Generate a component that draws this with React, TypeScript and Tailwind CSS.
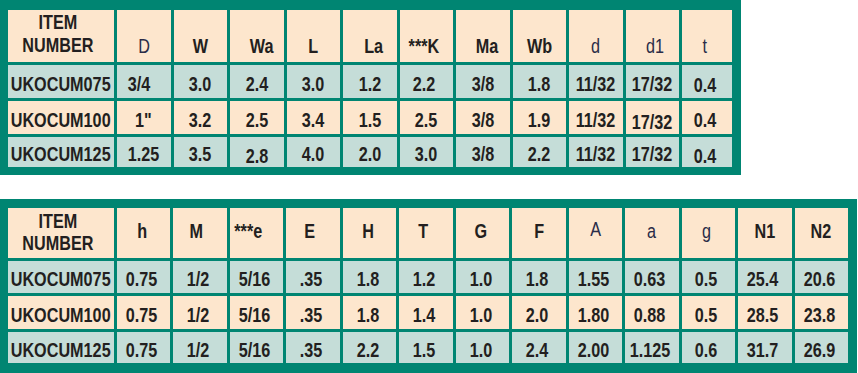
import React from "react";

type C = { t: string; n?: boolean; c?: string };

const CREAM = "bg-[#fde6cd]";
const GRAY = "bg-[#c5ddd8]";

const topHead: C[] = [
  { t: "D", n: true },
  { t: "W" },
  { t: "Wa", c: "translate-x-[5px]" },
  { t: "L" },
  { t: "La", c: "translate-x-[4px]" },
  { t: "***K", c: "-translate-x-[2px]" },
  { t: "Ma", c: "translate-x-[4px]" },
  { t: "Wb" },
  { t: "d", n: true },
  { t: "d1", n: true, c: "translate-x-[3px]" },
  { t: "t", n: true, c: "-translate-x-[2px]" },
];

const topRows: { id: string; v: C[] }[] = [
  {
    id: "UKOCUM075",
    v: [
      { t: "3/4", c: "-translate-x-[5px]" },
      { t: "3.0" },
      { t: "2.4" },
      { t: "3.0" },
      { t: "1.2" },
      { t: "2.2", c: "-translate-x-[2px]" },
      { t: "3/8" },
      { t: "1.8" },
      { t: "11/32" },
      { t: "17/32" },
      { t: "0.4", c: "-translate-x-[2px] translate-y-[1px]" },
    ],
  },
  {
    id: "UKOCUM100",
    v: [
      { t: "1\"" },
      { t: "3.2" },
      { t: "2.5" },
      { t: "3.4" },
      { t: "1.5" },
      { t: "2.5" },
      { t: "3/8" },
      { t: "1.9" },
      { t: "11/32" },
      { t: "17/32", c: "translate-y-[2px]" },
      { t: "0.4", c: "-translate-x-[2px]" },
    ],
  },
  {
    id: "UKOCUM125",
    v: [
      { t: "1.25" },
      { t: "3.5" },
      { t: "2.8", c: "translate-y-[2px]" },
      { t: "4.0" },
      { t: "2.0" },
      { t: "3.0" },
      { t: "3/8" },
      { t: "2.2" },
      { t: "11/32" },
      { t: "17/32" },
      { t: "0.4", c: "-translate-x-[2px] translate-y-[2px]" },
    ],
  },
];

const botHead: C[] = [
  { t: "h", c: "-translate-x-[2px]" },
  { t: "M", c: "-translate-x-[4px]" },
  { t: "***e", c: "-translate-x-[8px]" },
  { t: "E", c: "-translate-x-[3px]" },
  { t: "H", c: "-translate-x-[1px]" },
  { t: "T", c: "-translate-x-[3px]" },
  { t: "G", c: "-translate-x-[2px]" },
  { t: "F" },
  { t: "A", n: true, c: "-translate-y-[2px]" },
  { t: "a", n: true },
  { t: "g", n: true, c: "-translate-x-[2px]" },
  { t: "N1" },
  { t: "N2" },
];

const mk = (arr: string[]): C[] => arr.map((t) => ({ t, c: "-translate-x-[2px]" }));

const botRows: { id: string; v: C[] }[] = [
  {
    id: "UKOCUM075",
    v: mk(["0.75", "1/2", "5/16", ".35", "1.8", "1.2", "1.0", "1.8", "1.55", "0.63", "0.5", "25.4", "20.6"]),
  },
  {
    id: "UKOCUM100",
    v: mk(["0.75", "1/2", "5/16", ".35", "1.8", "1.4", "1.0", "2.0", "1.80", "0.88", "0.5", "28.5", "23.8"]),
  },
  {
    id: "UKOCUM125",
    v: mk(["0.75", "1/2", "5/16", ".35", "2.2", "1.5", "1.0", "2.4", "2.00", "1.125", "0.6", "31.7", "26.9"]),
  },
];

function Txt({ c }: { c: C }) {
  return (
    <span
      className={
        "inline-block whitespace-nowrap scale-x-[0.81] " +
        (c.n ? "font-normal text-[#2a2c48] " : "font-bold text-[#231f20] ") +
        (c.c ?? "")
      }
    >
      {c.t}
    </span>
  );
}

function ItemHead({ lead }: { lead: string }) {
  return (
    <div className={"flex flex-col items-center font-bold text-[#231f20] -translate-x-[3px] " + lead}>
      <span className="inline-block scale-x-[0.81] whitespace-nowrap">ITEM</span>
      <span className="inline-block scale-x-[0.81] whitespace-nowrap">NUMBER</span>
    </div>
  );
}

function DataRows({ rows }: { rows: { id: string; v: C[] }[] }) {
  return (
    <>
      {rows.map((r, i) => {
        const bg = i % 2 === 0 ? GRAY : CREAM;
        return (
          <React.Fragment key={r.id}>
            <div className={bg + " flex items-center justify-center pt-1 overflow-visible"}>
              <Txt c={{ t: r.id }} />
            </div>
            {r.v.map((c, j) => (
              <div key={j} className={bg + " flex items-center justify-center pt-1"}>
                <Txt c={c} />
              </div>
            ))}
          </React.Fragment>
        );
      })}
    </>
  );
}

export default function App() {
  return (
    <div className="bg-white w-[858px] h-[373px] overflow-hidden font-['Liberation_Sans',Arial,sans-serif] text-[20px] leading-[22px]">
      <div className="w-[741px] bg-[#008572] pt-[10px] pl-[8px] pr-[9px] pb-[8px]">
        <div className="grid grid-cols-[106px_repeat(10,minmax(0,1fr))_50px] grid-rows-[52px_33px_33px_30px] gap-[3px]">
          <div className={CREAM + " flex items-end justify-center pb-[5px]"}>
            <ItemHead lead="leading-[23px]" />
          </div>
          {topHead.map((c, i) => (
            <div key={i} className={CREAM + " flex items-end justify-center pb-[5px]"}>
              <Txt c={c} />
            </div>
          ))}
          <DataRows rows={topRows} />
        </div>
      </div>
      <div className="w-[857px] mt-[24px] bg-[#008572] pt-[9px] pl-[8px] pr-[9px] pb-[10px]">
        <div className="grid grid-cols-[106px_repeat(13,minmax(0,1fr))] grid-rows-[50px_32px_33px_31px] gap-[3px]">
          <div className={CREAM + " flex items-center justify-center pb-[2px]"}>
            <ItemHead lead="leading-[22px]" />
          </div>
          {botHead.map((c, i) => (
            <div key={i} className={CREAM + " flex items-center justify-center pb-1"}>
              <Txt c={c} />
            </div>
          ))}
          <DataRows rows={botRows} />
        </div>
      </div>
    </div>
  );
}
